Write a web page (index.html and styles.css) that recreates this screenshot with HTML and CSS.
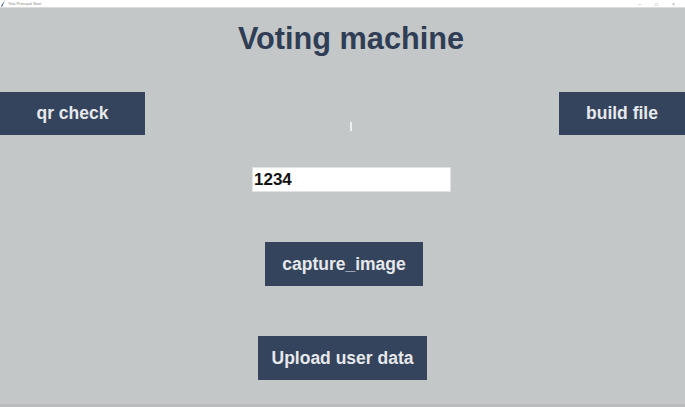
FILE: index.html
```html
<!DOCTYPE html>
<html>
<head>
<meta charset="utf-8">
<link rel="stylesheet" href="styles.css">
</head>
<body>
<div class="window">
  <div class="titlebar">
    <div class="tb-left">
      <svg class="tb-icon" width="5" height="7" viewBox="0 0 5 7"><path d="M4 0 L1 7 L0 6 Z" fill="#3a5a8c"/></svg>
      <span class="tb-title">Tela Principal Start</span>
    </div>
    <div class="tb-controls">
      <span class="tb-btn">–</span>
      <span class="tb-btn">□</span>
      <span class="tb-btn">×</span>
    </div>
  </div>
  <main class="content">
    <h1 class="heading">Voting machine</h1>
    <div class="top-row">
      <button class="btn btn-side btn-qr">qr check</button>
      <span class="tick"></span>
      <button class="btn btn-side btn-build">build file</button>
    </div>
    <input class="code-input" type="text" value="1234">
    <button class="btn btn-center btn-capture">capture_image</button>
    <button class="btn btn-center btn-upload">Upload user data</button>
  </main>
  <div class="bottom-edge"></div>
</div>
</body>
</html>
```
FILE: styles.css
```css
html, body {
  margin: 0;
  padding: 0;
}
body {
  width: 685px;
  height: 407px;
  overflow: hidden;
  background: #c4c7c8;
  font-family: "Liberation Sans", Arial, sans-serif;
}
.window {
  display: flex;
  flex-direction: column;
  height: 407px;
}
.titlebar {
  height: 8px;
  background: #ffffff;
  display: flex;
  align-items: center;
  justify-content: space-between;
  border-bottom: 1px solid #dcdcdc;
  box-sizing: border-box;
}
.tb-left {
  display: flex;
  align-items: center;
  gap: 2px;
  padding-left: 1px;
}
.tb-title {
  font-size: 4px;
  color: #888;
  line-height: 6px;
}
.tb-controls {
  display: flex;
  gap: 14px;
  padding-right: 10px;
}
.tb-btn {
  font-size: 5px;
  line-height: 6px;
  color: #999;
}
.content {
  flex: 1;
  display: flex;
  flex-direction: column;
  align-items: center;
}
.heading {
  margin: 14px 0 0 17px;
  font-size: 30.7px;
  line-height: 34px;
  font-weight: bold;
  color: #2f3d55;
}
.top-row {
  margin-top: 36px;
  width: 100%;
  display: grid;
  grid-template-columns: 145px 1fr 126px;
  align-items: center;
}
.btn {
  border: none;
  margin: 0;
  background: #34445c;
  color: #e6e8ec;
  font-family: "Liberation Sans", Arial, sans-serif;
  font-weight: bold;
  font-size: 17.5px;
  height: 44px;
  padding: 0;
  cursor: pointer;
}
.btn-side {
  height: 43px;
  width: 100%;
}
.tick {
  justify-self: center;
  width: 2px;
  height: 9px;
  margin-left: -3px;
  margin-top: 25px;
  background: #eef0f0;
}
.code-input {
  margin-top: 32px;
  margin-left: 18px;
  width: 199px;
  height: 25px;
  box-sizing: border-box;
  border: 1px solid #e0e2e3;
  background: #ffffff;
  padding: 0 0 0 1px;
  font-family: "Liberation Sans", Arial, sans-serif;
  font-size: 17px;
  font-weight: bold;
  color: #111;
  outline: none;
}
.btn-center {
  margin-top: 50px;
}
.btn-capture {
  width: 158px;
  margin-left: 3px;
}
.btn-upload {
  width: 169px;
}
.bottom-edge {
  height: 3px;
  background: #b9bbbd;
}
```
